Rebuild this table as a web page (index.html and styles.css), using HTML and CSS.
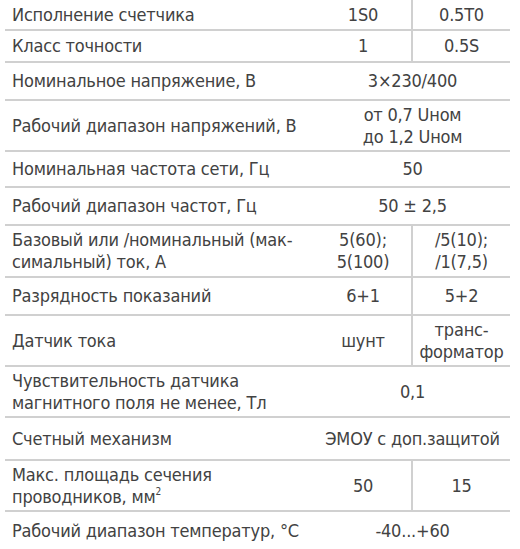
FILE: index.html
```html
<!DOCTYPE html>
<html lang="ru">
<head>
<meta charset="utf-8">
<link rel="stylesheet" href="styles.css">
</head>
<body>
<div class="table">
  <div class="row h30">
    <div class="name"><span>Исполнение счетчика</span></div>
    <div class="val"><span>1S0</span></div>
    <div class="val split"><span>0.5T0</span></div>
  </div>
  <div class="row h33">
    <div class="name"><span>Класс точности</span></div>
    <div class="val"><span>1</span></div>
    <div class="val split"><span>0.5S</span></div>
  </div>
  <div class="row h38">
    <div class="name"><span>Номинальное напряжение, В</span></div>
    <div class="val wide"><span>3×230/400</span></div>
  </div>
  <div class="row h51">
    <div class="name"><span>Рабочий диапазон напряжений, В</span></div>
    <div class="val wide"><span>от 0,7 Uном<br>до 1,2 Uном</span></div>
  </div>
  <div class="row h35">
    <div class="name"><span>Номинальная частота сети, Гц</span></div>
    <div class="val wide"><span>50</span></div>
  </div>
  <div class="row h38">
    <div class="name"><span>Рабочий диапазон частот, Гц</span></div>
    <div class="val wide"><span>50 ± 2,5</span></div>
  </div>
  <div class="row h52">
    <div class="name"><span>Базовый или /номинальный (мак-<br>симальный) ток, А</span></div>
    <div class="val"><span>5(60);<br>5(100)</span></div>
    <div class="val split"><span>/5(10);<br>/1(7,5)</span></div>
  </div>
  <div class="row h38">
    <div class="name"><span>Разрядность показаний</span></div>
    <div class="val"><span>6+1</span></div>
    <div class="val split"><span>5+2</span></div>
  </div>
  <div class="row h51">
    <div class="name"><span>Датчик тока</span></div>
    <div class="val"><span>шунт</span></div>
    <div class="val split"><span>транс-<br>форматор</span></div>
  </div>
  <div class="row h51">
    <div class="name"><span>Чувствительность датчика<br>магнитного поля не менее, Тл</span></div>
    <div class="val wide"><span>0,1</span></div>
  </div>
  <div class="row h43">
    <div class="name"><span>Счетный механизм</span></div>
    <div class="val wide"><span>ЭМОУ с доп.защитой</span></div>
  </div>
  <div class="row h51">
    <div class="name"><span>Макс. площадь сечения<br>проводников, мм<sup>2</sup></span></div>
    <div class="val"><span>50</span></div>
    <div class="val split"><span>15</span></div>
  </div>
  <div class="row h36 last">
    <div class="name"><span>Рабочий диапазон температур, °C</span></div>
    <div class="val wide"><span>-40...+60</span></div>
  </div>
</div>
</body>
</html>
```
FILE: styles.css
```css
html, body {
  margin: 0;
  padding: 0;
  background: #ffffff;
}
body {
  width: 520px;
  height: 549px;
  overflow: hidden;
  font-family: "DejaVu Sans Condensed", "DejaVu Sans", sans-serif;
  font-size: 18px;
  letter-spacing: -0.2px;
  color: #424242;
  white-space: nowrap;
}
.table {
  margin-left: 5px;
  width: 505px;
}
.row {
  display: grid;
  grid-template-columns: 310px 96px 99px;
  border-bottom: 2px solid #d0d0d0;
  box-sizing: border-box;
}
.row.last { border-bottom: none; }
.name {
  display: flex;
  align-items: center;
  padding-left: 7px;
  line-height: 22px;
}
.val {
  display: flex;
  align-items: center;
  justify-content: center;
  text-align: center;
  line-height: 22px;
}
.val.wide { grid-column: 2 / 4; }
.val.split { border-left: 2px solid #d0d0d0; }
sup {
  font-size: 10px;
  line-height: 0;
  vertical-align: 8px;
}
.h30 { height: 31px; }
.h33 { height: 32px; }
.h38 { height: 38px; }
.h51 { height: 51px; }
.h35 { height: 36px; }
.h52 { height: 52px; }
.h43 { height: 43px; }
.h36 { height: 37px; }
```
